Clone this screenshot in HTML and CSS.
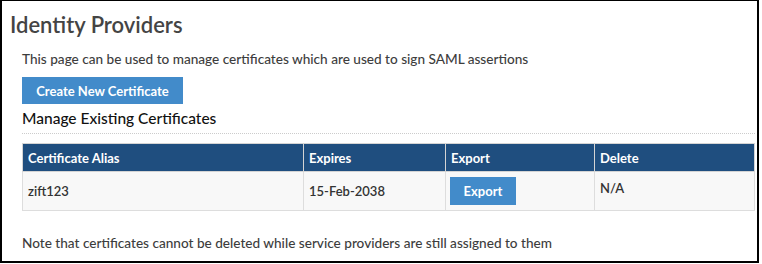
FILE: index.html
```html
<!DOCTYPE html>
<html>
<head>
<meta charset="utf-8">
<link rel="stylesheet" href="styles.css">
</head>
<body>
<div class="frame">
  <h1 class="title">Identity Providers</h1>
  <div class="content">
    <p class="intro">This page can be used to manage certificates which are used to sign SAML assertions</p>
    <button class="btn btn-create">Create New Certificate</button>
    <h2 class="section">Manage Existing Certificates</h2>
    <table class="certs">
      <thead>
        <tr><th class="c1">Certificate Alias</th><th class="c2">Expires</th><th class="c3">Export</th><th class="c4">Delete</th></tr>
      </thead>
      <tbody>
        <tr><td>zift123</td><td>15-Feb-2038</td><td class="cell-btn"><button class="btn btn-export">Export</button></td><td class="cell-top">N/A</td></tr>
      </tbody>
    </table>
    <p class="note">Note that certificates cannot be deleted while service providers are still assigned to them</p>
  </div>
</div>
</body>
</html>
```
FILE: styles.css
```css
html, body { margin: 0; padding: 0; background: #fff; }
body { font-family: Lato, "Liberation Sans", sans-serif; }
.frame {
  width: 759px; height: 263px; box-sizing: border-box;
  border-left: 2px solid #000; border-top: 1px solid #000; border-right: 2px solid #000; border-bottom: 2px solid #000;
  padding: 11px 0 0 8px;
}
.title { margin: 0; font-size: 22px; font-weight: 600; color: #444; line-height: 26px; }
.content { padding: 0 0 0 12px; }
.intro { margin: 12px 0 0; font-size: 13.6px; color: #3d3d3d; line-height: 18px; font-weight: 500; }
.btn {
  font-family: inherit; border: 0; background: #428bca; color: #fff; font-weight: 700;
  font-size: 13px; cursor: pointer;
}
.btn-create { margin-top: 9px; height: 27px; width: 161px; padding: 0; display: block; }
.section {
  margin: 0; font-size: 15.5px; font-weight: 500; color: #111; line-height: 22px;
  padding-top: 3px; padding-bottom: 4px; border-bottom: 1px dotted #ccc; width: 733px;
}
.certs { margin-top: 9px; border-collapse: collapse; width: 733px; font-size: 13px; }
.certs th {
  background: #1f4e7f; color: #fff; font-weight: 700; text-align: left; height: 28px; padding: 0 5px;
  border: 1px solid #d4d4d4; box-sizing: border-box; line-height: 16px;
}
.c1 { width: 281px; } .c2 { width: 142px; } .c3 { width: 149px; }
.certs td {
  background: #f8f8f8; color: #333; font-weight: 600; border: 1px solid #ddd; height: 39px;
  padding: 0 5px; vertical-align: middle; box-sizing: border-box;
}
.certs td.cell-btn { padding: 0 4px; }
.certs td.cell-top { vertical-align: top; padding-top: 8px; }
.btn-export { width: 66px; height: 28px; padding: 0; display: block; }
.note { margin: 23px 0 0; font-size: 13.6px; color: #3d3d3d; line-height: 18px; font-weight: 500; }
```
